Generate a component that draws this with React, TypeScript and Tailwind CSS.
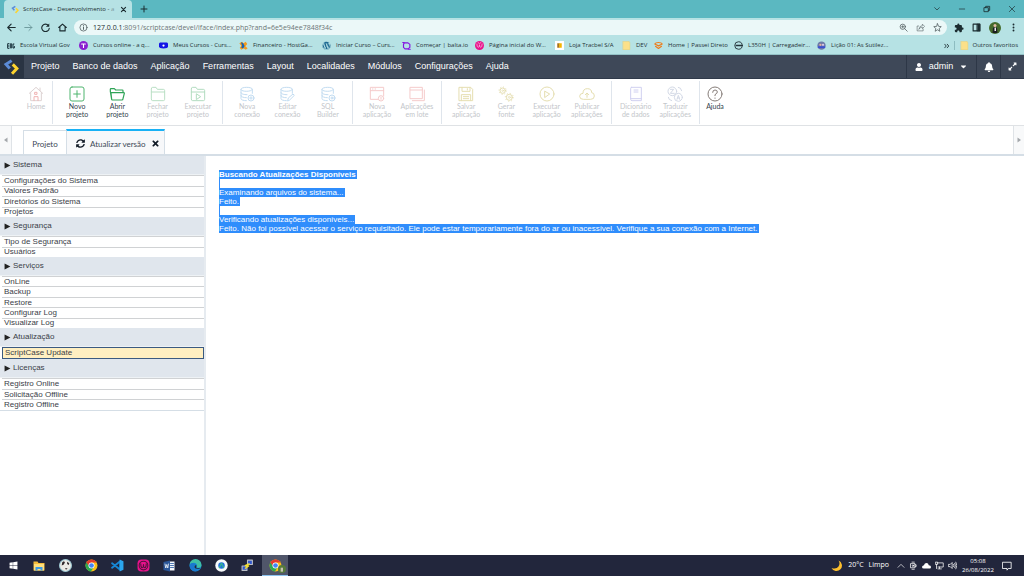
import type { ReactNode } from "react";
import { FaBell, FaSyncAlt, FaTimes, FaUser, FaWordpress, FaCaretDown, FaWindows, FaExpandAlt } from "react-icons/fa";
import { MdExtension } from "react-icons/md";

/* ---------- small shared drawings ---------- */

function Svg({ children, className = "size-3", box = "0 0 24 24" }: { children: ReactNode; className?: string; box?: string }) {
  return (
    <svg viewBox={box} className={"shrink-0 " + className} fill="none" stroke="currentColor" strokeWidth="2" strokeLinejoin="round" strokeLinecap="round" aria-hidden="true">
      {children}
    </svg>
  );
}

function ScriptCaseLogo({ className }: { className: string }) {
  return (
    <Svg className={className}>
      <path d="M11.500 3.500 4 8.500 9 14" stroke="#5b8bd6" strokeWidth="4" strokeLinejoin="miter" strokeLinecap="butt" />
      <path d="M13 8.500 18.500 14 12 21" stroke="#fdd32f" strokeWidth="4" strokeLinejoin="miter" strokeLinecap="butt" />
    </Svg>
  );
}

function ChromeLogo() {
  return (
    <Svg className="size-[13px]">
      <g stroke="none">
        <circle cx="12" cy="12" r="11" fill="#fbc116" />
        <path d="M2.500 6.500A11 11 0 0 0 11 23l5.500-8.500L12 12Z" fill="#2da94f" />
        <path d="M2.500 6.500A11 11 0 0 1 21.500 6.500H12L8 14Z" fill="#e33b2e" />
        <circle cx="12" cy="12" r="5.600" fill="#fff" />
        <circle cx="12" cy="12" r="4.300" fill="#4285f4" />
      </g>
    </Svg>
  );
}

/* ---------- browser window ---------- */

const bookmarkIcons = {
  evg: (
    <Svg className="size-2">
      <g stroke="#17303a" strokeWidth="3" strokeLinecap="butt">
        <path d="M7 5H2v14h5M2 12h5M10 4v15M14 4v15M22 6h-4v12h4v-6" />
      </g>
    </Svg>
  ),
  udemy: (
    <Svg className="size-[9px]">
      <circle cx="12" cy="12" r="12" fill="#8a1fd0" stroke="none" />
      <path d="M7 8h10M12 8v9" stroke="#fff" strokeWidth="3" />
    </Svg>
  ),
  meus: (
    <Svg className="size-[9px]">
      <path d="M3 4h18q3 0 3 4v6q0 6-12 6T0 14V8q0-4 3-4Z" fill="#1414e6" stroke="none" />
      <circle cx="12" cy="12" r="3" fill="#fff" stroke="none" />
    </Svg>
  ),
  hostga: (
    <Svg className="size-[9px]">
      <path d="M1 6 8 2l4 4 6-4 4 6-5 6 6 5-5 4-6-4-6 4-4-5 4-5Z" fill="#f59a1b" stroke="none" />
      <path d="m5 3 6 2 4 8-4 7-5-2 2-6Z" fill="#1763b5" stroke="none" />
    </Svg>
  ),
  wordpress: <FaWordpress className="size-[9px] shrink-0 text-[#1f6a93]" aria-hidden="true" />,
  balta: (
    <Svg className="size-[9px]">
      <path d="M2 4h4M6 5h10l5 4v8l-5 4H8l-4-4V9Z" stroke="#8412e0" strokeWidth="3" />
      <path d="M17 22h5" stroke="#8412e0" strokeWidth="3" />
    </Svg>
  ),
  wamp: (
    <Svg className="size-[9px]">
      <circle cx="12" cy="12" r="12" fill="#e8128a" stroke="none" />
      <path d="M5 8q0 9 3.500 9T12 10q0 7 3.500 7T19 8M8 4l4 3 4-3" stroke="#f9b8dc" strokeWidth="2" />
    </Svg>
  ),
  tracbel: (
    <Svg className="size-[9px]">
      <path d="M0 0h24v24H0Z" fill="#fff" stroke="none" />
      <path d="M6 6h6v12H6Z" fill="#a8741c" stroke="none" />
      <path d="M11 6h7v12h-7Z" fill="#f4b400" stroke="none" />
    </Svg>
  ),
  folder: (
    <Svg className="size-[9px]">
      <path d="M3 1h16l2 4v18H3Z" fill="#fbe089" stroke="#f0c95c" strokeWidth="1" />
    </Svg>
  ),
  passei: (
    <Svg className="size-[9px]">
      <path d="M2 8q2-4 10-4t10 4l-10 5Z" stroke="#ee7d1b" strokeWidth="3" />
      <path d="m4 14 8 6 8-6" stroke="#ee7d1b" strokeWidth="3" />
    </Svg>
  ),
  volvo: (
    <Svg className="size-[9px]">
      <circle cx="12" cy="12" r="10" stroke="#25343b" strokeWidth="2.500" />
      <path d="M6 12h15" stroke="#25343b" strokeWidth="4" />
    </Svg>
  ),
  licao: (
    <Svg className="size-[9px]">
      <circle cx="12" cy="12" r="11" fill="#6f7ba8" stroke="none" />
      <path d="M2 14h20v5H2Z" fill="#3b4fd0" stroke="none" />
      <circle cx="9" cy="10" r="3" fill="#e8b0a0" stroke="none" />
      <circle cx="16" cy="10" r="3" fill="#d9c6e6" stroke="none" />
    </Svg>
  ),
};

const bookmarks: { label: string; icon: keyof typeof bookmarkIcons; width: string }[] = [
  { label: "Escola Virtual Gov", icon: "evg", width: "w-[72px]" },
  { label: "Cursos online - a q...", icon: "udemy", width: "w-20" },
  { label: "Meus Cursos - Curs...", icon: "meus", width: "w-20" },
  { label: "Financeiro - HostGa...", icon: "hostga", width: "w-[83px]" },
  { label: "Iniciar Curso – Curs...", icon: "wordpress", width: "w-20" },
  { label: "Começar | balta.io", icon: "balta", width: "w-[73px]" },
  { label: "Página inicial do W...", icon: "wamp", width: "w-20" },
  { label: "Loja Tracbel S/A", icon: "tracbel", width: "w-[67px]" },
  { label: "DEV", icon: "folder", width: "w-8" },
  { label: "Home | Passei Direto", icon: "passei", width: "w-20" },
  { label: "L350H | Carregadeir...", icon: "volvo", width: "w-[83px]" },
  { label: "Lição 01: As Sutilez...", icon: "licao", width: "w-20" },
];

function TabStrip() {
  return (
    <div className="flex h-[18px] items-center bg-[#5bb8c1] pl-1 text-[#1b2c30]">
      <div className="flex h-full w-32 items-center rounded-t-[4px] bg-[#b6e2e4] pr-1 pl-[7px]">
        <ScriptCaseLogo className="size-[9px]" />
        <span className="ml-[3px] flex-1 text-[6px] whitespace-nowrap">ScriptCase - Desenvolvimento - <span className="opacity-40">a</span></span>
        <button type="button" aria-label="Fechar guia" className="flex size-[9px] items-center justify-center">
          <Svg className="size-[7px]"><path d="m5 5 14 14M19 5 5 19" strokeWidth="4" /></Svg>
        </button>
      </div>
      <button type="button" aria-label="Nova guia" className="ml-2"><Svg className="size-2"><path d="M12 3v18M3 12h18" strokeWidth="3" /></Svg></button>
      <div className="ml-auto flex items-center gap-[17px] pr-2">
        <button type="button" aria-label="Pesquisar guias"><Svg className="size-2"><path d="m5 8 7 7 7-7" /></Svg></button>
        <button type="button" aria-label="Minimizar"><Svg className="size-2"><path d="M4 12h16" /></Svg></button>
        <button type="button" aria-label="Restaurar"><Svg className="size-2"><path d="M4 8h12v12H4ZM8 8V4h12v12h-4" strokeWidth="2.500" /></Svg></button>
        <button type="button" aria-label="Fechar"><Svg className="size-2"><path d="m4 4 16 16M20 4 4 20" /></Svg></button>
      </div>
    </div>
  );
}

function AddressBar() {
  return (
    <div className="flex h-[19px] items-center bg-[#b6e2e4] pl-[7px] text-[#1b2c30]">
      <div className="flex items-center gap-2">
        <button type="button" aria-label="Voltar"><Svg className="size-[9px]"><path d="M22 12H3M11 3l-9 9 9 9" strokeWidth="3" /></Svg></button>
        <button type="button" aria-label="Avançar" className="text-[#6c979b]"><Svg className="size-[9px]"><path d="M2 12h19M13 4l8 8-8 8" strokeWidth="2.500" /></Svg></button>
        <button type="button" aria-label="Recarregar"><Svg className="size-[9px]"><path d="M20 7a10 10 0 1 0 2 7" strokeWidth="3" /><path d="M22 1v9h-9Z" fill="currentColor" stroke="none" /></Svg></button>
        <button type="button" aria-label="Página inicial"><Svg className="size-[9px]"><path d="M2 12 12 3l10 9M5 11v10h14V11" strokeWidth="3" /></Svg></button>
      </div>
      <div className="ml-[7px] flex h-[15px] flex-1 items-center rounded-full bg-[#ebf8f8] px-[5px]">
        <Svg className="size-[9px] text-[#4d5a5c]"><circle cx="12" cy="12" r="9.500" /><path d="M12 11v6M12 7v.5" strokeWidth="2.500" /></Svg>
        <label className="ml-[5px] flex flex-1 items-center text-[7px] leading-[13px]">
          <span>127.0.0.1</span>
          <input type="text" defaultValue=":8091/scriptcase/devel/iface/index.php?rand=6e5e94ee7848f34c" className="flex-1 bg-transparent text-[#6b7677] outline-none" />
        </label>
        <div className="flex items-center gap-2 text-[#4d5a5c]">
          <button type="button" aria-label="Zoom"><Svg className="size-[9px]"><circle cx="10" cy="10" r="7" /><path d="m15 15 7 7M7 10h6M10 7v6" /></Svg></button>
          <button type="button" aria-label="Compartilhar"><Svg className="size-[9px]"><path d="M7 8H3v13h16v-5M8 16q1-9 9-9V3l6 6-6 6v-4q-6 0-9 5Z" strokeWidth="1.500" /></Svg></button>
          <button type="button" aria-label="Favoritar"><Svg className="size-[9px]"><path d="m12 2 3 7 7 .7-5.500 5 1.700 7.300-6.200-4-6.200 4 1.700-7.300-5.500-5L9 9Z" /></Svg></button>
        </div>
      </div>
      <div className="flex items-center gap-2 pr-[6px] pl-[7px]">
        <button type="button" aria-label="Extensões"><MdExtension className="size-[10px]" /></button>
        <button type="button" aria-label="Painel lateral"><Svg className="size-[9px]"><path d="M3 3h18v18H3Z" strokeWidth="3" /><path d="M14 3h7v18h-7Z" fill="currentColor" /></Svg></button>
        <button type="button" aria-label="Perfil">
          <Svg className="size-3"><circle cx="12" cy="12" r="12" fill="#456b2c" stroke="none" /><path d="M8 12q4-4 8 0l1 10H7Z" fill="#1b1d20" stroke="none" /><circle cx="12" cy="7" r="3" fill="#e4bca4" stroke="none" /><path d="M11 11h3v7h-3Z" fill="#eee" stroke="none" /></Svg>
        </button>
        <button type="button" aria-label="Menu"><Svg className="size-[9px]"><g fill="currentColor" stroke="none"><circle cx="12" cy="4" r="2.500" /><circle cx="12" cy="12" r="2.500" /><circle cx="12" cy="20" r="2.500" /></g></Svg></button>
      </div>
    </div>
  );
}

function BookmarkBar() {
  return (
    <nav aria-label="Favoritos" className="flex h-[18px] items-center border-b border-[#93c1c5] bg-[#b6e2e4] pl-[7px] text-[6px] text-[#1f3135]">
      {bookmarks.map((b) => (
        <a key={b.label} href="#" className={"flex shrink-0 items-center gap-[5px] whitespace-nowrap " + b.width}>
          {bookmarkIcons[b.icon]}
          {b.label}
        </a>
      ))}
      <div className="ml-auto flex items-center gap-1 pr-[6px] whitespace-nowrap">
        <button type="button" aria-label="Mais favoritos"><Svg className="size-[6px]"><path d="m3 5 6 7-6 7M13 5l6 7-6 7" strokeWidth="3.500" /></Svg></button>
        <span className="h-[9px] border-l border-[#8dbcc0] pr-px" />
        <a href="#" className="flex items-center gap-1">{bookmarkIcons.folder}Outros favoritos</a>
      </div>
    </nav>
  );
}

/* ---------- ScriptCase application ---------- */

const menus = ["Projeto", "Banco de dados", "Aplicação", "Ferramentas", "Layout", "Localidades", "Módulos", "Configurações", "Ajuda"];

function MenuBar() {
  return (
    <header className="flex h-6 items-stretch border-b border-[#303a4a] bg-[#3e4858] font-['Liberation_Sans',sans-serif] text-[9px] text-white">
      <a href="#" aria-label="ScriptCase" className="flex w-6 items-center justify-center bg-[#2a3443]"><ScriptCaseLogo className="size-[18px]" /></a>
      <nav className="flex items-center gap-[13px] pl-[7px]">
        {menus.map((m) => <button type="button" key={m}>{m}</button>)}
      </nav>
      <div className="ml-auto flex">
        <button type="button" className="flex w-[70px] items-center justify-between border-l border-[#2d3747] px-2">
          <FaUser className="size-2" /><span>admin</span><FaCaretDown className="size-[9px]" />
        </button>
        <button type="button" aria-label="Notificações" className="flex w-6 items-center justify-center border-l border-[#2d3747]"><FaBell className="size-[10px]" /></button>
        <button type="button" aria-label="Tela cheia" className="flex w-6 items-center justify-center border-l border-[#2d3747]"><FaExpandAlt className="size-[9px]" /></button>
      </div>
    </header>
  );
}

const folderPath = <path d="M2 4q0-2 2-2h5l2 3h9q2 0 2 2v13q0 2-2 2H4q-2 0-2-2ZM2 9h20" />;
const databasePath = <path d="M20 5c0 4-17 4-17 0s17-4 17 0v6M3 5v14c0 2 4 3 8 3M3 10c0 2 4 3 9 3M3 14.500c0 2 4 3 8 3" />;

interface Tool { top: string; bottom?: string; color: string; enabled?: boolean; art: ReactNode }

const toolGroups: { width: string; tools: Tool[] }[] = [
  { width: "w-[53px] pl-5", tools: [
    { top: "Home", color: "text-[#ddd2d2]", art: <><path d="M2 11 12 2l10 9M4 10v12h16V10M18 7V3" /><path d="M9 22v-6h6v6M10.500 9.500h3v3h-3Z" stroke="#f0b4b4" /></> },
  ] },
  { width: "w-[170px] px-1", tools: [
    { top: "Novo", bottom: "projeto", color: "text-[#4fb56f]", enabled: true, art: <><rect x="1.500" y="1.500" width="21" height="21" rx="3" /><path d="M12 7v10M7 12h10" /></> },
    { top: "Abrir", bottom: "projeto", color: "text-[#2fa457]", enabled: true, art: <path d="M4 20 2 8V5q0-1 1-1h5l2 2h10q1 0 1 1v3M4 20 3 11q0-1 1-1h18q1 0 1 1l-2 8q0 2-2 2H5q-1 0-1-1Z" strokeWidth="1.800" /> },
    { top: "Fechar", bottom: "projeto", color: "text-[#b9dfc4]", art: folderPath },
    { top: "Executar", bottom: "projeto", color: "text-[#b2dcc0]", art: <>{folderPath}<path d="m10 12 6 4-6 4Z" /></> },
  ] },
  { width: "w-[130px] px-1", tools: [
    { top: "Nova", bottom: "conexão", color: "text-[#c2dcf1]", art: <>{databasePath}<circle cx="18" cy="18" r="4.500" /><path d="M18 16v4M16 18h4" /></> },
    { top: "Editar", bottom: "conexão", color: "text-[#c2dcf1]", art: <>{databasePath}<path d="m13 22 1-4 7-6 2 2-7 7Z" /></> },
    { top: "SQL", bottom: "Builder", color: "text-[#c2dcf1]", art: <>{databasePath}<circle cx="18" cy="18" r="4.500" /><circle cx="18" cy="18" r="1.500" /></> },
  ] },
  { width: "w-[89px] px-1", tools: [
    { top: "Nova", bottom: "aplicação", color: "text-[#f5cbcb]", art: <><path d="M14 20H2V2h20v13M2 7h20M5 4.500h1M9 4.500h1" /><circle cx="18" cy="18.500" r="4" /><path d="M18 17v3" /></> },
    { top: "Aplicações", bottom: "em lote", color: "text-[#f5cbcb]", art: <><path d="M2 2h18v17H2ZM2 6h18" /><path d="M5 22h18V6" /></> },
  ] },
  { width: "w-[170px] px-1", tools: [
    { top: "Salvar", bottom: "aplicação", color: "text-[#e5deb0]", art: <path d="M2 2h17l3 3v17H2ZM6 2v6h12V2M14 4v2M5 22v-9h14v9M8 16h8M8 19h8" /> },
    { top: "Gerar", bottom: "fonte", color: "text-[#e5deb0]", art: <><circle cx="7" cy="7" r="4" /><circle cx="7" cy="7" r="5.500" strokeDasharray="1.500 2.800" strokeLinecap="butt" /><circle cx="7" cy="7" r="1.200" strokeWidth="1" /><circle cx="17" cy="17" r="4.500" /><circle cx="17" cy="17" r="6" strokeDasharray="1.500 3.200" strokeLinecap="butt" /><circle cx="17" cy="17" r="1.500" strokeWidth="1" /></> },
    { top: "Executar", bottom: "aplicação", color: "text-[#e5deb0]", art: <><circle cx="12" cy="12" r="10.500" /><path d="m9 8 7 4-7 5Z" /></> },
    { top: "Publicar", bottom: "aplicações", color: "text-[#e5deb0]", art: <><path d="M6 20q-5 0-5-4.500T6 11q0-7 6.500-7T19 10q4 0 4 5t-5 5Z" /><path d="M12 17v-6M9.500 13l2.500-2.500 2.500 2.500" /></> },
  ] },
  { width: "w-[88px] px-1", tools: [
    { top: "Dicionário", bottom: "de dados", color: "text-[#d0d0f0]", art: <path d="M5 2h15v20H6q-2 0-2-2V4q0-2 1-2ZM4 19h16M9 6h6M9 9h6" /> },
    { top: "Traduzir", bottom: "aplicações", color: "text-[#d3d9e6]", art: <><circle cx="8" cy="8" r="6.500" /><circle cx="17" cy="17" r="6" /><path d="M5 5h5l-5 6h6M15 20l2-6 2 6M15.500 18h3M17 2q4 0 5 5M2 17q0 4 5 5" /></> },
  ] },
];

function ToolButton({ tool }: { tool: Tool }) {
  return (
    <button type="button" disabled={!tool.enabled} className={"flex flex-1 flex-col items-center text-[7px] leading-2 whitespace-nowrap " + (tool.enabled ? "text-[#333f4d]" : "text-[#c3c6ca]")}>
      <Svg className={"size-4 " + tool.color}><g strokeWidth="1.500">{tool.art}</g></Svg>
      <span>{tool.top}</span>
      {tool.bottom && <span>{tool.bottom}</span>}
    </button>
  );
}

function Toolbar() {
  return (
    <div className="flex h-[47px] border-b border-[#dfe2e5] bg-white pt-[2px] pb-px font-['Lato',sans-serif]">
      {toolGroups.map((g, i) => (
        <div key={i} className={"flex shrink-0 items-start border-r border-[#dfe5ec] pt-[5px] " + g.width}>
          {g.tools.map((t) => <ToolButton key={t.top + t.bottom} tool={t} />)}
        </div>
      ))}
      <div className="flex w-[30px] items-start pt-[5px]">
        <ToolButton tool={{ top: "Ajuda", color: "text-[#857c78]", enabled: true, art: <><circle cx="12" cy="12" r="10.500" /><path d="M8.500 9.500q0-3.500 3.500-3.500t3.500 3q0 2-3.500 4v1.500M12 18v.5" /></> }} />
      </div>
    </div>
  );
}

function DocumentTabs() {
  return (
    <div className="flex h-[30px] items-stretch border-b-2 border-[#d5dee6] bg-white font-['Lato',sans-serif] text-[8px] text-[#3c4856]">
      <button type="button" aria-label="Rolar para a esquerda" className="flex w-3 items-center border-r border-[#dfe3e7] bg-[#f8f9fa] pl-[3px] text-[#a3a7ab]">
        <Svg className="size-[6px]"><path d="M18 2v20L4 12Z" fill="currentColor" stroke="none" /></Svg>
      </button>
      <div className="flex items-end pl-[11px]">
        <button type="button" className="h-6 w-[43px] border-t border-l border-[#d5dee6] bg-white pt-[3px]">Projeto</button>
        <div className="flex h-[25px] w-[99px] items-center gap-[5px] border-x border-t-2 border-x-[#d5dee6] border-t-[#19b1f5] bg-[#f7f8fa] pt-[2px] pl-[9px]">
          <FaSyncAlt className="size-[9px] shrink-0 text-[#111a26]" aria-hidden="true" />
          <span className="whitespace-nowrap">Atualizar versão</span>
          <button type="button" aria-label="Fechar"><FaTimes className="size-[9px] text-[#111a26]" /></button>
        </div>
      </div>
      <button type="button" aria-label="Rolar para a direita" className="ml-auto flex w-[11px] items-center justify-center border-l border-[#dfe3e7] bg-[#f8f9fa] text-[#a3a7ab]">
        <Svg className="size-[6px]"><path d="M6 2v20l14-10Z" fill="currentColor" stroke="none" /></Svg>
      </button>
    </div>
  );
}

const sections: { title: string; height: string; items: string[] }[] = [
  { title: "Sistema", height: "h-[61px]", items: ["Configurações do Sistema", "Valores Padrão", "Diretórios do Sistema", "Projetos"] },
  { title: "Segurança", height: "h-10", items: ["Tipo de Segurança", "Usuários"] },
  { title: "Serviços", height: "h-[71px]", items: ["OnLine", "Backup", "Restore", "Configurar Log", "Visualizar Log"] },
  { title: "Atualização", height: "h-[31px]", items: ["ScriptCase Update"] },
  { title: "Licenças", height: "h-[51px]", items: ["Registro Online", "Solicitação Offline", "Registro Offline"] },
];

function Sidebar() {
  return (
    <nav aria-label="Configurações" className="w-[206px] shrink-0 border-r-2 border-[#e6ebf0] text-[8px] text-[#3a4047]">
      {sections.map((s) => (
        <section key={s.title} className={"flex flex-col " + s.height}>
          <h2 className="flex h-[19px] shrink-0 items-center gap-[2px] border-b border-[#eef2f5] bg-[#e0e6ed] pl-1">
            <Svg className="size-[7px] text-[#222]"><path d="M2 2v20L22 12Z" fill="currentColor" stroke="none" /></Svg>
            {s.title}
          </h2>
          <ul className="flex flex-1 flex-col pl-[2px]">
            {s.items.map((item) => (
              <li key={item} className="flex flex-1">
                <a
                  href="#"
                  className={"flex flex-1 items-center pl-[2px] leading-2 " + (item === "ScriptCase Update" ? "border border-[#3b5a80] bg-[#ffefc1]" : "border-t border-[#d0d2d4] bg-white")}
                >
                  {item}
                </a>
              </li>
            ))}
          </ul>
        </section>
      ))}
      <div className="border-t border-[#d5dee6]" />
    </nav>
  );
}

const messages = [
  "Buscando Atualizações Disponíveis",
  "",
  "Examinando arquivos do sistema...",
  "Feito.",
  "",
  "Verificando atualizações disponíveis...",
  "Feito. Não foi possível acessar o serviço requisitado. Ele pode estar temporariamente fora do ar ou inacessível. Verifique a sua conexão com a Internet.",
];

function Output() {
  return (
    <div className="flex flex-1 flex-col items-start px-[13px] pt-[14px] text-[8px] leading-[9px] text-white">
      {messages.map((m, i) => (
        <p key={i} className={"min-h-[9px] bg-[#2f8dfc] pr-px " + (i === 0 ? "font-bold" : "")}>{m}</p>
      ))}
    </div>
  );
}

/* ---------- desktop taskbar ---------- */

const apps: { name: string; icon: ReactNode }[] = [
  { name: "Iniciar", icon: <FaWindows className="size-[9px] text-white" /> },
  { name: "Explorador de Arquivos", icon: <Svg className="size-3"><g stroke="none"><path d="M1 3h8l2 3h12v15H1Z" fill="#f5bd3b" /><path d="M2 8h20v13H2Z" fill="#ffdf7c" /><path d="M5 21v-7h14v7h-4v-3H9v3Z" fill="#3c9be3" /></g></Svg> },
  { name: "DBeaver", icon: <Svg className="size-[13px]"><circle cx="12" cy="12" r="11" fill="#eceae5" stroke="#9bc6d0" /><path d="M6 6l3-2 2 2-2 4-4 2ZM15 5l4 3-1 3-3-2ZM11 17h5l-3 3Z" fill="#30282a" stroke="none" /></Svg> },
  { name: "Google Chrome", icon: <ChromeLogo /> },
  { name: "Visual Studio Code", icon: <Svg className="size-[13px]"><path d="M17 4v16L2 8M17 4 2 16" stroke="#1686d3" strokeWidth="3.500" /><path d="m16 1 7 3v16l-7 3Z" fill="#2ba6ef" stroke="none" /></Svg> },
  { name: "WampServer", icon: <Svg className="size-[13px]"><rect x="1" y="1" width="22" height="22" rx="7" fill="#e9128c" stroke="none" /><circle cx="12" cy="12" r="8" stroke="#52123d" /><path d="M7 9q0 7 2.500 7T12 10q0 6 2.500 6T17 9" stroke="#52123d" /></Svg> },
  { name: "Word", icon: <Svg className="size-3"><g stroke="none"><path d="M12 3h11v18H12Z" fill="#f4f7fc" /><path d="M1 4 14 1v22L1 20Z" fill="#2a5699" /></g><path d="m4 8 1.500 8L7.500 9l2 7L11 8" stroke="#fff" strokeWidth="1.500" /><path d="M15 7h6M15 11h6M15 15h6" stroke="#4d77b3" /></Svg> },
  { name: "Microsoft Edge", icon: <Svg className="size-[13px]"><g stroke="none"><circle cx="12" cy="12" r="11" fill="#178bd4" /><path d="M1 11A11 11 0 0 1 23 11q0 6-7 5-3-1-1-4-1-5-6-5-6 0-8 4Z" fill="#3fbfa5" /><path d="M1 12q3-6 8-4 4 1 5 4-4-2-5 2 0 6 9 6-6 5-12 1Q1 18 1 12Z" fill="#1a78cf" /><path d="M13 11q2 2 0 4 2 3 8 1l-2 2q-8 1-9-3 0-3 3-4Z" fill="#22263c" /></g></Svg> },
  { name: "Aplicativo N", icon: <Svg className="size-[13px]"><circle cx="12" cy="12" r="11.500" fill="#f7fafb" stroke="none" /><circle cx="12" cy="12" r="6" fill="#2373dc" stroke="none" /><path d="M8 16 12 8l4 8" stroke="#35b98c" /></Svg> },
  { name: "PuTTY", icon: <Svg className="size-[13px]"><path d="M12 2h9v8h-9ZM2 13h9v8H2Z" fill="#3057ce" stroke="#b9bec7" /><path d="m15 9-7 3 6 1-6 4" stroke="#f8e12b" strokeWidth="2.500" /></Svg> },
];

function Taskbar() {
  return (
    <footer className="flex h-[21px] items-stretch bg-[#22263c] text-[7px] text-white">
      <div className="flex">
        {apps.map((a) => <button type="button" key={a.name} aria-label={a.name} className="flex w-[26px] items-center justify-center">{a.icon}</button>)}
        <button type="button" aria-label="ScriptCase no Chrome" className="ml-[2px] flex w-[26px] items-center justify-center border-b border-[#8cc2ef] bg-[#50566a]">
          <span className="relative flex"><ChromeLogo /><Svg className="absolute -right-1 -bottom-px size-2"><circle cx="12" cy="12" r="12" fill="#567a3c" stroke="none" /><path d="M8 8h7v12H8Z" fill="#c9c2b4" stroke="none" /></Svg></span>
        </button>
      </div>
      <div className="ml-auto flex items-center pr-3">
        <button type="button" className="flex items-center gap-[5px]">
          <Svg className="size-3"><path d="M15 1a11 11 0 1 1-14 15q10 3 14-3t0-12Z" fill="#fdbf2d" stroke="none" /></Svg>
          <span>20°C</span><span>Limpo</span>
        </button>
        <div className="flex items-center gap-1 pr-[5px] pl-2">
          <button type="button" aria-label="Mostrar ícones ocultos"><Svg className="size-2"><path d="m3 16 9-9 9 9" /></Svg></button>
          <Svg className="size-[9px]"><path d="M5 7h11v11H5ZM16 10h3v5h-3M8 3h6M8 22h6" /><circle cx="10.500" cy="12.500" r="2" /></Svg>
          <Svg className="size-[9px]"><path d="M5 20q-5 0-5-4t5-5q2-6 7-6t6 6q6 0 6 5t-5 4Z" fill="currentColor" stroke="none" /></Svg>
          <Svg className="size-[9px]"><path d="M6 5h16v11H8M12 16v4M8 21h9M2 3h5v6H2ZM4 9v11" /></Svg>
          <Svg className="size-[9px]"><path d="M2 9h4l5-5v16l-5-5H2ZM15 9q2 3 0 6M18 6q4 6 0 12M21 3q6 9 0 18" /></Svg>
        </div>
        <time className="w-8 text-center text-[6px] leading-[9px]">05:08<br />26/08/2022</time>
        <button type="button" aria-label="Notificações" className="ml-2"><Svg className="size-[10px]"><path d="M2 3h20v15h-7l-3 4v-4H2Z" /></Svg></button>
      </div>
    </footer>
  );
}

export default function App() {
  return (
    <div className="flex min-h-screen flex-col bg-white font-['Open_Sans','Noto_Sans',sans-serif]">
      <TabStrip />
      <AddressBar />
      <BookmarkBar />
      <MenuBar />
      <Toolbar />
      <DocumentTabs />
      <main className="flex flex-1 font-['Liberation_Sans',sans-serif]">
        <Sidebar />
        <Output />
      </main>
      <Taskbar />
    </div>
  );
}
